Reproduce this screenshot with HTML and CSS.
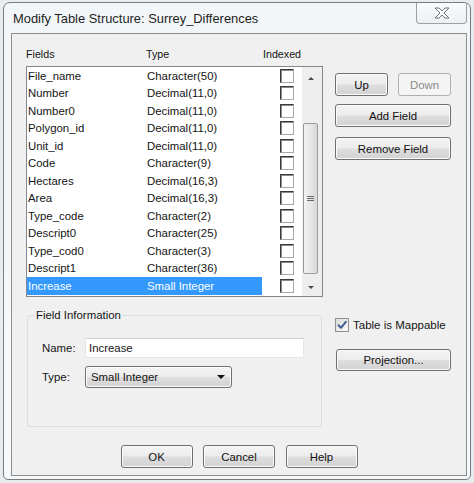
FILE: index.html
```html
<!DOCTYPE html>
<html>
<head>
<meta charset="utf-8">
<link rel="stylesheet" href="styles.css">
</head>
<body>
<div class="window">
  <div class="titlebar">
    <span class="title">Modify Table Structure: Surrey_Differences</span>
    <div class="close">
      <svg width="16" height="12" viewBox="-1 -1 16 12"><polygon points="0,0 4,0 7,3 10,0 14,0 9,5 14,10 10,10 7,7 4,10 0,10 5,5" fill="#ffffff" stroke="#6d737a" stroke-width="1" stroke-linejoin="round"/></svg>
    </div>
  </div>
  <div class="client">
    <div class="top">
      <div class="fields">
        <div class="head"><span>Fields</span><span>Type</span><span>Indexed</span></div>
        <div class="list">
          <div class="rows">
            <div class="row"><div class="cells"><span>File_name</span><span>Character(50)</span></div><span class="cb"></span></div>
            <div class="row"><div class="cells"><span>Number</span><span>Decimal(11,0)</span></div><span class="cb"></span></div>
            <div class="row"><div class="cells"><span>Number0</span><span>Decimal(11,0)</span></div><span class="cb"></span></div>
            <div class="row"><div class="cells"><span>Polygon_id</span><span>Decimal(11,0)</span></div><span class="cb"></span></div>
            <div class="row"><div class="cells"><span>Unit_id</span><span>Decimal(11,0)</span></div><span class="cb"></span></div>
            <div class="row"><div class="cells"><span>Code</span><span>Character(9)</span></div><span class="cb"></span></div>
            <div class="row"><div class="cells"><span>Hectares</span><span>Decimal(16,3)</span></div><span class="cb"></span></div>
            <div class="row"><div class="cells"><span>Area</span><span>Decimal(16,3)</span></div><span class="cb"></span></div>
            <div class="row"><div class="cells"><span>Type_code</span><span>Character(2)</span></div><span class="cb"></span></div>
            <div class="row"><div class="cells"><span>Descript0</span><span>Character(25)</span></div><span class="cb"></span></div>
            <div class="row"><div class="cells"><span>Type_cod0</span><span>Character(3)</span></div><span class="cb"></span></div>
            <div class="row"><div class="cells"><span>Descript1</span><span>Character(36)</span></div><span class="cb"></span></div>
            <div class="row sel"><div class="cells"><span>Increase</span><span>Small Integer</span></div><span class="cb"></span></div>
          </div>
          <div class="scroll">
            <div class="sb-up"><span class="tri-up"></span></div>
            <div class="track"><div class="thumb"><span class="grip"></span></div></div>
            <div class="sb-down"><span class="tri-down"></span></div>
          </div>
        </div>
      </div>
      <div class="side">
        <div class="pair"><button class="btn half">Up</button><button class="btn half" disabled>Down</button></div>
        <button class="btn wide add">Add Field</button>
        <button class="btn wide remove">Remove Field</button>
      </div>
    </div>
    <div class="middle">
      <fieldset class="info">
        <legend>Field Information</legend>
        <div class="frow"><span class="lbl">Name:</span><div class="input">Increase</div></div>
        <div class="frow second"><span class="lbl">Type:</span><div class="combo"><span>Small Integer</span><span class="arrow"></span></div></div>
      </fieldset>
      <div class="side2">
        <div class="check">
          <span class="box"><svg width="12" height="12" viewBox="0 0 12 12"><path d="M2.5 6.2 L5 8.8 L9.8 2.8" fill="none" stroke="#3f5f93" stroke-width="2" stroke-linecap="round" stroke-linejoin="round"/></svg></span>
          <span>Table is Mappable</span>
        </div>
        <button class="btn wide proj">Projection...</button>
      </div>
    </div>
    <div class="footer">
      <button class="btn foot">OK</button>
      <button class="btn foot">Cancel</button>
      <button class="btn foot">Help</button>
    </div>
  </div>
</div>
</body>
</html>
```
FILE: styles.css
```css
html, body {
  margin: 0;
  padding: 0;
}
body {
  width: 474px;
  height: 483px;
  overflow: hidden;
  background: #e9ecef;
  font-family: "Liberation Sans", Arial, sans-serif;
  font-size: 11.4px;
  color: #141414;
}
.window {
  box-sizing: border-box;
  margin: 2px 0 0 3px;
  width: 468px;
  height: 478px;
  border: 1px solid #767b82;
  border-radius: 7px 7px 5px 5px;
  background: linear-gradient(#f3f6f9, #f6f8fa);
  display: flex;
  flex-direction: column;
}
.titlebar {
  height: 30px;
  display: flex;
  justify-content: space-between;
  align-items: flex-start;
}
.title {
  padding: 7px 0 0 9px;
  line-height: 17px;
  font-size: 12.9px;
  color: #1e1e1e;
}
.close {
  box-sizing: border-box;
  width: 51px;
  height: 21px;
  margin-right: 3px;
  border: 1px solid #9aa1a8;
  border-top: none;
  border-radius: 0 0 4px 4px;
  background: linear-gradient(#f8fafb, #eef1f4);
  display: flex;
  align-items: center;
  justify-content: center;
}
.client {
  box-sizing: border-box;
  margin: 0 3px 3px 7px;
  height: 443px;
  border: 1px solid #8d8d8d;
  background: #f0f0f0;
  padding: 13px 14px 0 14px;
  display: flex;
  flex-direction: column;
}
.top {
  display: flex;
  gap: 12px;
}
.fields {
  width: 297px;
}
.head {
  display: grid;
  grid-template-columns: 120px 117px auto;
  height: 14px;
  line-height: 14px;
  font-size: 10.7px;
}
.list {
  box-sizing: border-box;
  margin-top: 5px;
  height: 231px;
  border: 1px solid #828790;
  background: #fff;
  display: flex;
}
.rows {
  width: 275px;
}
.row {
  display: flex;
  align-items: center;
  height: 17.5px;
}
.cells {
  box-sizing: border-box;
  width: 235px;
  height: 100%;
  padding-left: 1px;
  display: grid;
  grid-template-columns: 119px 1fr;
  align-items: center;
  white-space: nowrap;
}
.row.sel .cells {
  background: #3399ff;
  color: #fff;
}
.cb {
  box-sizing: border-box;
  margin-left: 18px;
  width: 14px;
  height: 14px;
  border: 1px solid;
  border-color: #3a3a3a #a8a8a8 #a8a8a8 #3a3a3a;
  box-shadow: inset 1px 1px 0 #8a8a8a;
  background: #fff;
}
.scroll {
  box-sizing: border-box;
  width: 20px;
  padding-right: 3px;
  background: #eeeeee;
  display: flex;
  flex-direction: column;
}
.sb-up {
  height: 22px;
  display: flex;
  align-items: center;
  justify-content: center;
  padding-top: 1px;
  box-sizing: border-box;
}
.sb-down {
  height: 18px;
  display: flex;
  align-items: center;
  justify-content: center;
}
.tri-up {
  width: 0;
  height: 0;
  border-left: 3px solid transparent;
  border-right: 3px solid transparent;
  border-bottom: 3px solid #4a4a4a;
}
.tri-down {
  width: 0;
  height: 0;
  border-left: 3px solid transparent;
  border-right: 3px solid transparent;
  border-top: 3px solid #4a4a4a;
}
.track {
  flex: 1;
  padding-top: 34px;
}
.thumb {
  box-sizing: border-box;
  margin-left: 1px;
  width: 15px;
  height: 151px;
  border: 1px solid #9b9b9b;
  border-radius: 2px;
  background: linear-gradient(to right, #f3f3f3, #e4e4e4 60%, #d8d8d8);
  display: flex;
  align-items: center;
  justify-content: center;
}
.grip {
  width: 7px;
  height: 5px;
  background: repeating-linear-gradient(#6a6a6a 0 1px, transparent 1px 2px);
}
.side {
  width: 116px;
  margin-top: 26px;
  display: flex;
  flex-direction: column;
}
.pair {
  display: flex;
  gap: 10px;
}
.btn {
  box-sizing: border-box;
  height: 23px;
  margin: 0;
  padding: 0;
  font-family: "Liberation Sans", Arial, sans-serif;
  font-size: 11.4px;
  color: #111;
  border: 1px solid #707070;
  border-radius: 3px;
  background: linear-gradient(#f4f4f4 0%, #ececec 48%, #dedede 52%, #d2d2d2 100%);
  box-shadow: inset 0 0 0 1px #fbfbfb;
}
.btn:disabled {
  border-color: #adb2b5;
  background: #f4f4f4;
  color: #8a8a8a;
  box-shadow: none;
}
.half {
  width: 53px;
}
.wide {
  width: 116px;
}
.add {
  margin-top: 8px;
}
.remove {
  margin-top: 10px;
}
.middle {
  display: flex;
  margin-top: 11px;
}
.info {
  box-sizing: border-box;
  margin: 0 0 0 1px;
  width: 295px;
  border: 1px solid #d5dfe5;
  border-radius: 3px;
  padding: 16px 0 38px 7px;
}
.info legend {
  padding: 0 1px;
  line-height: 14px;
  font-size: 11.4px;
}
.frow {
  display: flex;
  align-items: center;
  margin-left: 7px;
}
.frow.second {
  margin-top: 8px;
}
.lbl {
  width: 43px;
}
.input {
  box-sizing: border-box;
  width: 219px;
  height: 20px;
  line-height: 18px;
  padding-left: 3px;
  background: #fff;
  border: 1px solid #e3e6e9;
  border-top-color: #cfd3d7;
}
.combo {
  box-sizing: border-box;
  width: 147px;
  height: 22px;
  padding: 0 6px 0 5px;
  border: 1px solid #707070;
  border-radius: 3px;
  background: linear-gradient(#f4f4f4 0%, #ececec 48%, #dedede 52%, #d2d2d2 100%);
  box-shadow: inset 0 0 0 1px #fbfbfb;
  display: flex;
  align-items: center;
  justify-content: space-between;
}
.arrow {
  width: 0;
  height: 0;
  border-left: 4px solid transparent;
  border-right: 4px solid transparent;
  border-top: 4px solid #111;
}
.side2 {
  margin-left: 13px;
  display: flex;
  flex-direction: column;
}
.check {
  margin-top: 10px;
  display: flex;
  align-items: center;
  gap: 4px;
  line-height: 14px;
  font-size: 11.5px;
}
.box {
  box-sizing: border-box;
  width: 14px;
  height: 14px;
  border: 1px solid #8e8f8f;
  background: linear-gradient(135deg, #dcdcdc, #fafafa);
  display: flex;
  align-items: center;
  justify-content: center;
}
.proj {
  margin-top: 17px;
  margin-left: 1px;
  width: 115px;
  height: 22px;
}
.footer {
  margin-top: 18px;
  display: flex;
  justify-content: center;
  gap: 10.5px;
}
.foot {
  width: 72px;
}
```
